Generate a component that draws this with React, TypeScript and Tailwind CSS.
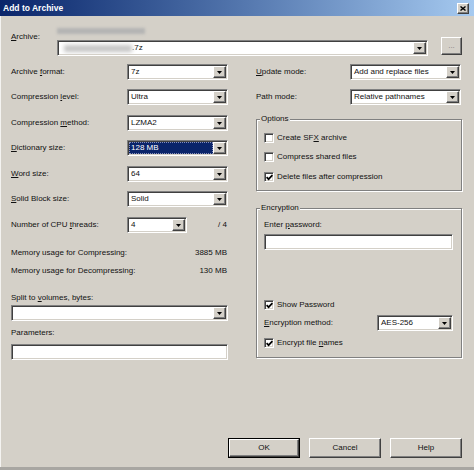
import React from 'react';

// classic win9x bevels
const sunken =
  'border border-t-[#808080] border-l-[#808080] border-b-white border-r-white shadow-[inset_1px_1px_0_#404040,inset_-1px_-1px_0_#d4d0c8]';
const raised =
  'border border-t-white border-l-white border-b-[#404040] border-r-[#404040] shadow-[inset_-1px_-1px_0_#808080]';

function Arrow() {
  return (
    <svg width="5" height="3" viewBox="0 0 5 3">
      <path d="M0 0h5L2.5 3z" fill="#000" />
    </svg>
  );
}

function Combo({
  children,
  className = '',
  selected = false,
}: {
  children?: React.ReactNode;
  className?: string;
  selected?: boolean;
}) {
  return (
    <div className={`flex h-[16px] bg-white p-[1px] ${sunken} ${className}`}>
      <div
        className={`flex-1 flex items-center pl-[2px] whitespace-nowrap overflow-hidden ${
          selected ? 'bg-[#0a246a] text-white outline-dotted outline-1 outline-[#8890b8] -outline-offset-1' : ''
        }`}
      >
        {children}
      </div>
      <div className={`w-[13px] flex items-center justify-center bg-[#d4d0c8] ${raised}`}>
        <Arrow />
      </div>
    </div>
  );
}

function Check({ checked = false, children }: { checked?: boolean; children: React.ReactNode }) {
  return (
    <div className="flex items-center h-[10px]">
      <div className={`w-[10px] h-[10px] bg-white flex items-center justify-center ${sunken}`}>
        {checked && (
          <svg width="7" height="7" viewBox="0 0 7 7">
            <path d="M0.6 3.2 L2.6 5.2 L6.4 1.2" stroke="#000" strokeWidth="1.7" fill="none" />
          </svg>
        )}
      </div>
      <span className="ml-[3px]">{children}</span>
    </div>
  );
}

function U({ children }: { children: React.ReactNode }) {
  return <span className="underline underline-offset-1">{children}</span>;
}

function Btn({ children, isDefault = false }: { children: React.ReactNode; isDefault?: boolean }) {
  if (isDefault) {
    return (
      <div className="w-[72px] h-[20px] border border-black flex">
        <div className={`flex-1 flex items-center justify-center ${raised}`}>{children}</div>
      </div>
    );
  }
  return <div className={`w-[72px] h-[20px] flex items-center justify-center ${raised}`}>{children}</div>;
}

function Row({ label, children, className = '' }: { label: React.ReactNode; children: React.ReactNode; className?: string }) {
  return (
    <div className={`flex items-center h-[16px] ${className}`}>
      <div className="flex-1">{label}</div>
      {children}
    </div>
  );
}

export default function App() {
  return (
    <div className="w-[474px] h-[470px] bg-[#d4d0c8] flex flex-col border-b-[3px] border-b-[#a8a6a2] shadow-[inset_1px_0_0_#f4f3f1] font-['Liberation_Sans',Arial,sans-serif] text-[8px] leading-[10px] text-[#111] select-none">
      {/* title bar */}
      <div className="h-[16px] flex items-center bg-gradient-to-r from-[#0a246a] to-[#a6caf0] pl-[3px] pr-[5px]">
        <span className="text-white font-bold text-[8.5px] flex-1">Add to Archive</span>
        <div className={`w-[12px] h-[11px] bg-[#d4d0c8] flex items-center justify-center ${raised}`}>
          <svg width="6" height="5" viewBox="0 0 6 5">
            <path d="M0.5 0.5 L5.5 4.5 M5.5 0.5 L0.5 4.5" stroke="#000" strokeWidth="1.4" />
          </svg>
        </div>
      </div>

      {/* archive */}
      <div className="flex pt-[10px] pl-[11px] pr-[12px]">
        <div className="w-[46px] pt-[6px]">
          <U>A</U>rchive:
        </div>
        <div className="flex-1">
          <div className="mt-[2px] h-[6px] w-[88px] bg-[#b4b4b4] blur-[1.5px]" />
          <Combo className="mt-[6px]">
            <span className="inline-block w-[68px] h-[7px] ml-[3px] bg-[#c4c4c4] blur-[2px]" />
            <span>.7z</span>
          </Combo>
        </div>
        <div className={`ml-[13px] mt-[11px] w-[21px] h-[18px] flex items-center justify-center text-[#808080] ${raised}`}>
          ...
        </div>
      </div>

      {/* columns */}
      <div className="flex gap-[27px] mt-[8px] pl-[11px] pr-[12px]">
        {/* left */}
        <div className="w-[217px] flex flex-col">
          <Row label={<>Archive <U>f</U>ormat:</>}>
            <Combo className="w-[101px]">7z</Combo>
          </Row>
          <Row className="mt-[9px]" label={<>Compression <U>l</U>evel:</>}>
            <Combo className="w-[101px]">Ultra</Combo>
          </Row>
          <Row className="mt-[10px]" label={<>Compression <U>m</U>ethod:</>}>
            <Combo className="w-[101px]">LZMA2</Combo>
          </Row>
          <Row className="mt-[9px]" label={<><U>D</U>ictionary size:</>}>
            <Combo className="w-[101px]" selected>128 MB</Combo>
          </Row>
          <Row className="mt-[10px]" label={<><U>W</U>ord size:</>}>
            <Combo className="w-[101px]">64</Combo>
          </Row>
          <Row className="mt-[9px]" label={<><U>S</U>olid Block size:</>}>
            <Combo className="w-[101px]">Solid</Combo>
          </Row>
          <Row className="mt-[10px]" label={<>Number of CPU <U>t</U>hreads:</>}>
            <Combo className="w-[60px]">4</Combo>
            <div className="w-[41px] text-right pr-[1px]">/ 4</div>
          </Row>

          <div className="flex mt-[15px] pr-[1px]">
            <div className="flex-1">Memory usage for Compressing:</div>
            <div>3885 MB</div>
          </div>
          <div className="flex mt-[8px] pr-[1px]">
            <div className="flex-1">Memory usage for Decompressing:</div>
            <div>130 MB</div>
          </div>

          <div className="mt-[17px]">
            Split to <U>v</U>olumes, bytes:
          </div>
          <Combo className="mt-[2px] w-[217px]" />

          <div className="mt-[7px]">Parameters:</div>
          <div className={`mt-[6px] h-[16px] w-[217px] bg-white ${sunken}`} />
        </div>

        {/* right */}
        <div className="w-[207px] flex flex-col">
          <div className="flex items-center h-[16px]">
            <div className="w-[95px] pl-[1px]">
              <U>U</U>pdate mode:
            </div>
            <Combo className="w-[111px]">Add and replace files</Combo>
          </div>
          <div className="flex items-center h-[16px] mt-[9px]">
            <div className="w-[95px] pl-[1px]">Path mode:</div>
            <Combo className="w-[111px]">Relative pathnames</Combo>
          </div>

          <fieldset className="mt-[9px] ml-[1px] w-[206px] border border-[#808080] shadow-[inset_1px_1px_0_#fff,1px_1px_0_#fff] pl-[3px] pb-[8px]">
            <legend className="px-[1px] bg-[#d4d0c8]">Options</legend>
            <div className="pl-[4px] pt-[9px] flex flex-col">
              <Check>
                Create SF<U>X</U> archive
              </Check>
              <div className="mt-[9px]">
                <Check>Compress shared files</Check>
              </div>
              <div className="mt-[10px]">
                <Check checked>Delete files after compression</Check>
              </div>
            </div>
          </fieldset>

          <fieldset className="mt-[12px] ml-[1px] w-[206px] border border-[#808080] shadow-[inset_1px_1px_0_#fff,1px_1px_0_#fff] pl-[3px] pb-[9px]">
            <legend className="px-[1px] bg-[#d4d0c8]">Encryption</legend>
            <div className="pl-[4px] pt-[7px] flex flex-col">
              <div>
                Enter <U>p</U>assword:
              </div>
              <div className={`mt-[4px] h-[16px] w-[189px] bg-white ${sunken}`} />
              <div className="mt-[50px]">
                <Check checked>Show Password</Check>
              </div>
              <div className="flex items-center h-[16px] mt-[5px]">
                <div className="w-[113px]">
                  <U>E</U>ncryption method:
                </div>
                <Combo className="w-[76px]">AES-256</Combo>
              </div>
              <div className="mt-[7px]">
                <Check checked>
                  Encrypt file <U>n</U>ames
                </Check>
              </div>
            </div>
          </fieldset>
        </div>
      </div>

      <div className="flex-1" />

      {/* buttons */}
      <div className="flex justify-end gap-[9px] pr-[12px] pb-[9px]">
        <Btn isDefault>OK</Btn>
        <Btn>Cancel</Btn>
        <Btn>Help</Btn>
      </div>
    </div>
  );
}
